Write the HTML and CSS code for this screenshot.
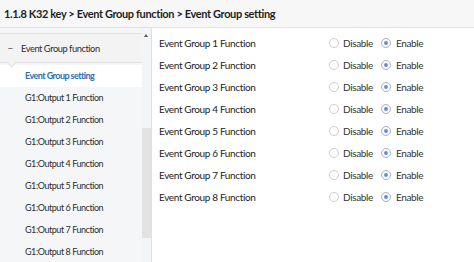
FILE: index.html
```html
<!DOCTYPE html>
<html>
<head>
<meta charset="utf-8">
<link rel="stylesheet" href="styles.css">
</head>
<body>
<div class="header">1.1.8 K32 key &gt; Event Group function &gt; Event Group setting</div>
<div class="main">
  <div class="sidebar">
    <div class="group"><span class="minus">−</span><span>Event Group function</span></div>
    <div class="item active">Event Group setting</div>
    <div class="item">G1:Output 1 Function</div>
    <div class="item">G1:Output 2 Function</div>
    <div class="item">G1:Output 3 Function</div>
    <div class="item">G1:Output 4 Function</div>
    <div class="item">G1:Output 5 Function</div>
    <div class="item">G1:Output 6 Function</div>
    <div class="item">G1:Output 7 Function</div>
    <div class="item">G1:Output 8 Function</div>
  </div>
  <div class="scrollbar"><div class="arrow"></div><div class="thumb"></div></div>
  <div class="content">
    <div class="row"><span class="label">Event Group 1 Function</span><span class="opt"><i class="radio"></i>Disable</span><span class="opt"><i class="radio on"></i>Enable</span></div>
    <div class="row"><span class="label">Event Group 2 Function</span><span class="opt"><i class="radio"></i>Disable</span><span class="opt"><i class="radio on"></i>Enable</span></div>
    <div class="row"><span class="label">Event Group 3 Function</span><span class="opt"><i class="radio"></i>Disable</span><span class="opt"><i class="radio on"></i>Enable</span></div>
    <div class="row"><span class="label">Event Group 4 Function</span><span class="opt"><i class="radio"></i>Disable</span><span class="opt"><i class="radio on"></i>Enable</span></div>
    <div class="row"><span class="label">Event Group 5 Function</span><span class="opt"><i class="radio"></i>Disable</span><span class="opt"><i class="radio on"></i>Enable</span></div>
    <div class="row"><span class="label">Event Group 6 Function</span><span class="opt"><i class="radio"></i>Disable</span><span class="opt"><i class="radio on"></i>Enable</span></div>
    <div class="row"><span class="label">Event Group 7 Function</span><span class="opt"><i class="radio"></i>Disable</span><span class="opt"><i class="radio on"></i>Enable</span></div>
    <div class="row"><span class="label">Event Group 8 Function</span><span class="opt"><i class="radio"></i>Disable</span><span class="opt"><i class="radio on"></i>Enable</span></div>
  </div>
</div>
</body>
</html>
```
FILE: styles.css
```css
html, body { margin: 0; padding: 0; }
body {
  width: 474px; height: 262px; overflow: hidden;
  background: #fff;
  font-family: "Lato", "Noto Sans", sans-serif;
  color: #222;
}
.header {
  height: 27px;
  border-bottom: 1px solid #e2e2e2;
  background: #f7f7f7;
  font-weight: 700;
  font-size: 11px;
  letter-spacing: -0.37px;
  line-height: 27px;
  padding-left: 4px;
  color: #1e1e1e;
}
.main { display: flex; height: 234px; }
.sidebar {
  width: 142px;
  padding-top: 5px;
  background: #f5f6f7;
  font-size: 9px;
  letter-spacing: -0.45px;
  color: #2e2e2e;
}
.group {
  height: 30px;
  box-sizing: border-box;
  border-top: 1px solid #e3e3e3;
  border-bottom: 1px solid #e3e3e3;
  background: #f3f3f3;
  display: flex; align-items: center;
  position: relative;
  font-size: 9.3px;
}
.group::after {
  content: ""; position: absolute; left: 8px; bottom: -4px;
  width: 6px; height: 6px; background: #f3f3f3;
  border-right: 1px solid #e3e3e3; border-bottom: 1px solid #e3e3e3;
  transform: rotate(45deg);
}
.minus { width: 21px; text-align: center; font-size: 10px; color: #444; letter-spacing: 0; }
.item {
  height: 22px; line-height: 22px; padding-left: 25px; white-space: nowrap;
}
.item.active { background: #fff; color: #2b6cb0; font-weight: 700; margin-top: 2px; letter-spacing: -0.55px; }
.scrollbar {
  width: 9px;
  background: #f3f4f5;
  border-right: 1px solid #e0e0e0;
  position: relative;
}
.arrow {
  position: absolute; left: 2px; top: 6px;
  width: 0; height: 0;
  border-left: 2.5px solid transparent; border-right: 2.5px solid transparent;
  border-bottom: 3px solid #555;
}
.thumb {
  position: absolute; left: 0; right: 0; top: 100px; height: 110px;
  background: #e2e2e2;
}
.content { flex: 1; padding-top: 4px; padding-left: 7px; font-size: 10px; letter-spacing: -0.36px; }
.row { height: 22px; display: flex; align-items: center; }
.label { width: 170px; }
.opt { display: flex; align-items: center; margin-right: 8px; color: #333; }
.radio {
  width: 8px; height: 8px; border-radius: 50%;
  border: 1px solid #cfcfcf; background: #fff;
  margin-right: 4px; box-sizing: content-box;
  display: inline-block; position: relative;
}
.opt + .opt .radio { margin-right: 5px; }
.radio.on { border-color: #9fb3d3; }
.radio.on::after {
  content: ""; position: absolute; left: 2px; top: 2px;
  width: 4px; height: 4px; border-radius: 50%;
  background: #6d8fc7;
}
```
